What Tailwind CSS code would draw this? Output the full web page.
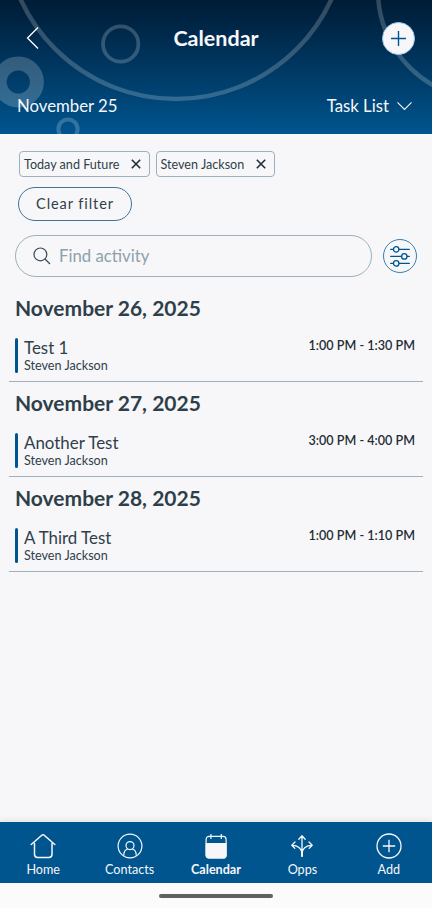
<!DOCTYPE html>
<html lang="en">
<head>
<meta charset="utf-8">
<title>Calendar</title>
<script src="https://cdn.jsdelivr.net/npm/@tailwindcss/browser@4"></script>
</head>
<body class="bg-[#f7f7fa]">
<div class="w-[432px] h-[908px] flex flex-col overflow-hidden font-['Lato',sans-serif] text-[#2f3f49] bg-[#f7f7fa]">
  <header class="relative h-[134px] shrink-0 bg-linear-to-b from-[#001c36] to-[#00558f] text-[#f7f7fa]">
    <svg class="absolute inset-0" width="432" height="134" fill="none" stroke="#fff" stroke-opacity=".2">
      <circle cx="176" cy="-72" r="171" stroke-width="4.5"/>
      <circle cx="486" cy="-9" r="108" stroke-width="4.5"/>
      <circle cx="120.7" cy="44" r="17.7" stroke-width="3.8"/>
      <circle cx="18.3" cy="82" r="18.6" stroke-width="14"/>
      <circle cx="68" cy="129" r="9.6" stroke-width="4"/>
    </svg>
    <div class="relative flex flex-col h-full">
      <div class="h-[76px] px-[17px] flex items-center justify-between">
        <div class="w-[33px] pl-[7px]"><svg width="18" height="24" viewBox="0 0 18 24" fill="none" stroke="#fff" stroke-width="1.3"><path d="M14 1.5 3.5 12 14 22.5"/></svg></div>
        <h1 class="text-[21.5px] leading-[26px] font-bold">Calendar</h1>
        <div class="size-[33px] rounded-full bg-[#f7f7fa] border border-[#9fc6e6] flex items-center justify-center"><svg width="17" height="17" viewBox="0 0 17 17" stroke="#00558f" stroke-width="1.4"><path d="M8.5 1v15M1 8.5h15"/></svg></div>
      </div>
      <div class="h-[58px] pl-[17px] pr-[19px] pt-[1px] flex items-center justify-between text-[16.75px] leading-[22px]">
        <span>November 25</span>
        <div class="flex items-center gap-[7px]"><span>Task List</span><svg width="17" height="10" viewBox="0 0 17 10" fill="none" stroke="#f7f7fa" stroke-width="1.1"><path d="M1.5 1.3 8.5 8.5 15.5 1.3"/></svg></div>
      </div>
    </div>
  </header>

  <main class="flex-1 flex flex-col">
    <div class="mt-[17px] pl-[18.5px] flex gap-[6px] text-[12.6px] leading-[24px]">
      <div class="w-[131px] h-[26px] border border-[#9db0bb] rounded-[4px] pl-[4.5px] pr-[8px] flex items-center justify-between"><span class="whitespace-nowrap pt-[1px]">Today and Future</span><svg width="10" height="10" viewBox="0 0 10 10" stroke="#1f2d36" stroke-width="1.6"><path d="M.8.8 9.2 9.2M9.2.8.8 9.2"/></svg></div>
      <div class="w-[119px] h-[26px] border border-[#9db0bb] rounded-[4px] pl-[4px] pr-[8px] flex items-center justify-between"><span class="whitespace-nowrap pt-[1px]">Steven Jackson</span><svg width="10" height="10" viewBox="0 0 10 10" stroke="#1f2d36" stroke-width="1.6"><path d="M.8.8 9.2 9.2M9.2.8.8 9.2"/></svg></div>
    </div>
    <button class="mt-[9.5px] ml-[18px] w-[114px] h-[34px] rounded-full border border-[#3f7494] text-[14.6px] leading-[20px] tracking-[0.9px] flex items-center justify-center whitespace-nowrap">Clear filter</button>
    <div class="mt-[14.5px] pl-[15px] pr-[15px] flex items-center justify-between">
      <div class="w-[357px] h-[42px] rounded-full border border-[#9db0bb] pl-[17px] flex items-center gap-[8px] text-[16.75px] leading-[22px] text-[#8ca1ad]"><svg width="18" height="18" viewBox="0 0 18 18" fill="none" stroke="#3a4a54" stroke-width="1.2"><circle cx="7.4" cy="7.4" r="6.4"/><path d="m12 12 5 5"/></svg><span>Find activity</span></div>
      <div class="size-[34px] rounded-full border border-[#3b7dae] flex items-center justify-center"><svg width="22" height="22" viewBox="0 0 22 22" fill="#f7f7fa" stroke="#00558f" stroke-width="1.3" stroke-linecap="round"><path d="M1.7 4.4H20.3M1.7 11.4H20.3M1.7 18.4H20.3"/><circle cx="7.2" cy="4.4" r="2.7"/><circle cx="15.3" cy="11.4" r="2.7"/><circle cx="7.2" cy="18.4" r="2.7"/></svg></div>
    </div>

    <section class="mt-[10px] mx-[9px] h-[95px] border-b border-[#9db0bb]">
      <h2 class="pt-[8px] pl-[6px] text-[21px] leading-[26px] font-bold">November 26, 2025</h2>
      <div class="mt-[17px] pl-[6px] pr-[8px] flex items-start">
        <div class="w-[3px] h-[35px] rounded-full bg-[#00558f]"></div>
        <div class="ml-[6px] flex-1"><div class="text-[16.9px] leading-[20px]">Test 1</div><div class="text-[12.6px] leading-[15px]">Steven Jackson</div></div>
        <div class="text-[12.6px] leading-[16px] font-semibold text-[#1f2d36]">1:00 PM - 1:30 PM</div>
      </div>
    </section>
    <section class="mx-[9px] h-[95px] border-b border-[#9db0bb]">
      <h2 class="pt-[8px] pl-[6px] text-[21px] leading-[26px] font-bold">November 27, 2025</h2>
      <div class="mt-[17px] pl-[6px] pr-[8px] flex items-start">
        <div class="w-[3px] h-[35px] rounded-full bg-[#00558f]"></div>
        <div class="ml-[6px] flex-1"><div class="text-[16.9px] leading-[20px]">Another Test</div><div class="text-[12.6px] leading-[15px]">Steven Jackson</div></div>
        <div class="text-[12.6px] leading-[16px] font-semibold text-[#1f2d36]">3:00 PM - 4:00 PM</div>
      </div>
    </section>
    <section class="mx-[9px] h-[95px] border-b border-[#9db0bb]">
      <h2 class="pt-[8px] pl-[6px] text-[21px] leading-[26px] font-bold">November 28, 2025</h2>
      <div class="mt-[17px] pl-[6px] pr-[8px] flex items-start">
        <div class="w-[3px] h-[35px] rounded-full bg-[#00558f]"></div>
        <div class="ml-[6px] flex-1"><div class="text-[16.9px] leading-[20px]">A Third Test</div><div class="text-[12.6px] leading-[15px]">Steven Jackson</div></div>
        <div class="text-[12.6px] leading-[16px] font-semibold text-[#1f2d36]">1:00 PM - 1:10 PM</div>
      </div>
    </section>
  </main>

  <nav class="h-[61px] shrink-0 bg-[#00558f] shadow-[0_-2px_6px_rgba(0,0,0,0.08)] grid grid-cols-5 text-[#f7f7fa] text-[12.6px] leading-[16px]">
    <div class="flex flex-col items-center pt-[11px] gap-[3px]">
      <svg width="26" height="26" viewBox="0 0 26 26" fill="none" stroke="#f7f7fa" stroke-width="1.5" stroke-linecap="round" stroke-linejoin="round"><path d="M1.2 11.5 11.8 2.2Q13 1.2 14.2 2.2L24.8 11.5M4.5 10.5V21.2Q4.5 24.4 7.7 24.4H18.8Q22 24.4 22 21.2V10.5"/></svg>
      <span>Home</span>
    </div>
    <div class="flex flex-col items-center pt-[11px] gap-[3px]">
      <svg width="26" height="26" viewBox="0 0 26 26" fill="none" stroke="#f7f7fa" stroke-width="1.2"><circle cx="13" cy="13" r="11.9"/><circle cx="13" cy="12.6" r="4"/><path d="M6.8 22.8V22Q6.8 17 10.8 16M19.2 22.8V22Q19.2 17 15.2 16"/></svg>
      <span>Contacts</span>
    </div>
    <div class="flex flex-col items-center pt-[11px] gap-[3px]">
      <svg width="26" height="26" viewBox="0 0 26 26" fill="none" stroke="#f7f7fa" stroke-width="1.2"><rect x="3.1" y="3.4" width="20" height="21.5" rx="3"/><path d="M2.6 10H23.6V22Q23.6 25.4 20.4 25.4H5.8Q2.6 25.4 2.6 22Z" fill="#f7f7fa" stroke="none"/><path d="M7.9 1V6M18.3 1V6"/></svg>
      <span class="font-bold">Calendar</span>
    </div>
    <div class="flex flex-col items-center pt-[11px] gap-[3px]">
      <svg width="26" height="26" viewBox="0 0 26 26" fill="none" stroke="#f7f7fa" stroke-width="1.3" stroke-linecap="round" stroke-linejoin="round"><path d="M13 23V3M9.8 6.2 13 2.8 16.2 6.2M13 20Q12 12.5 3 12.3M13 20Q14 12.5 23 12.3M6 9 2.8 12.2 5.8 15.4M20 9 23.2 12.2 20.2 15.4"/><path d="M13 23V18" stroke-width="2"/></svg>
      <span>Opps</span>
    </div>
    <div class="flex flex-col items-center pt-[11px] gap-[3px]">
      <svg width="26" height="26" viewBox="0 0 26 26" fill="none" stroke="#f7f7fa" stroke-width="1.3"><circle cx="13" cy="13" r="12"/><path d="M13 6.8V19.2M6.8 13H19.2"/></svg>
      <span>Add</span>
    </div>
  </nav>
  <footer class="h-[25px] shrink-0 bg-[#fbfbfb] flex justify-center pt-[11px]"><div class="w-[114px] h-[4px] rounded-full bg-[#606060]"></div></footer>
</div>
</body>
</html>
